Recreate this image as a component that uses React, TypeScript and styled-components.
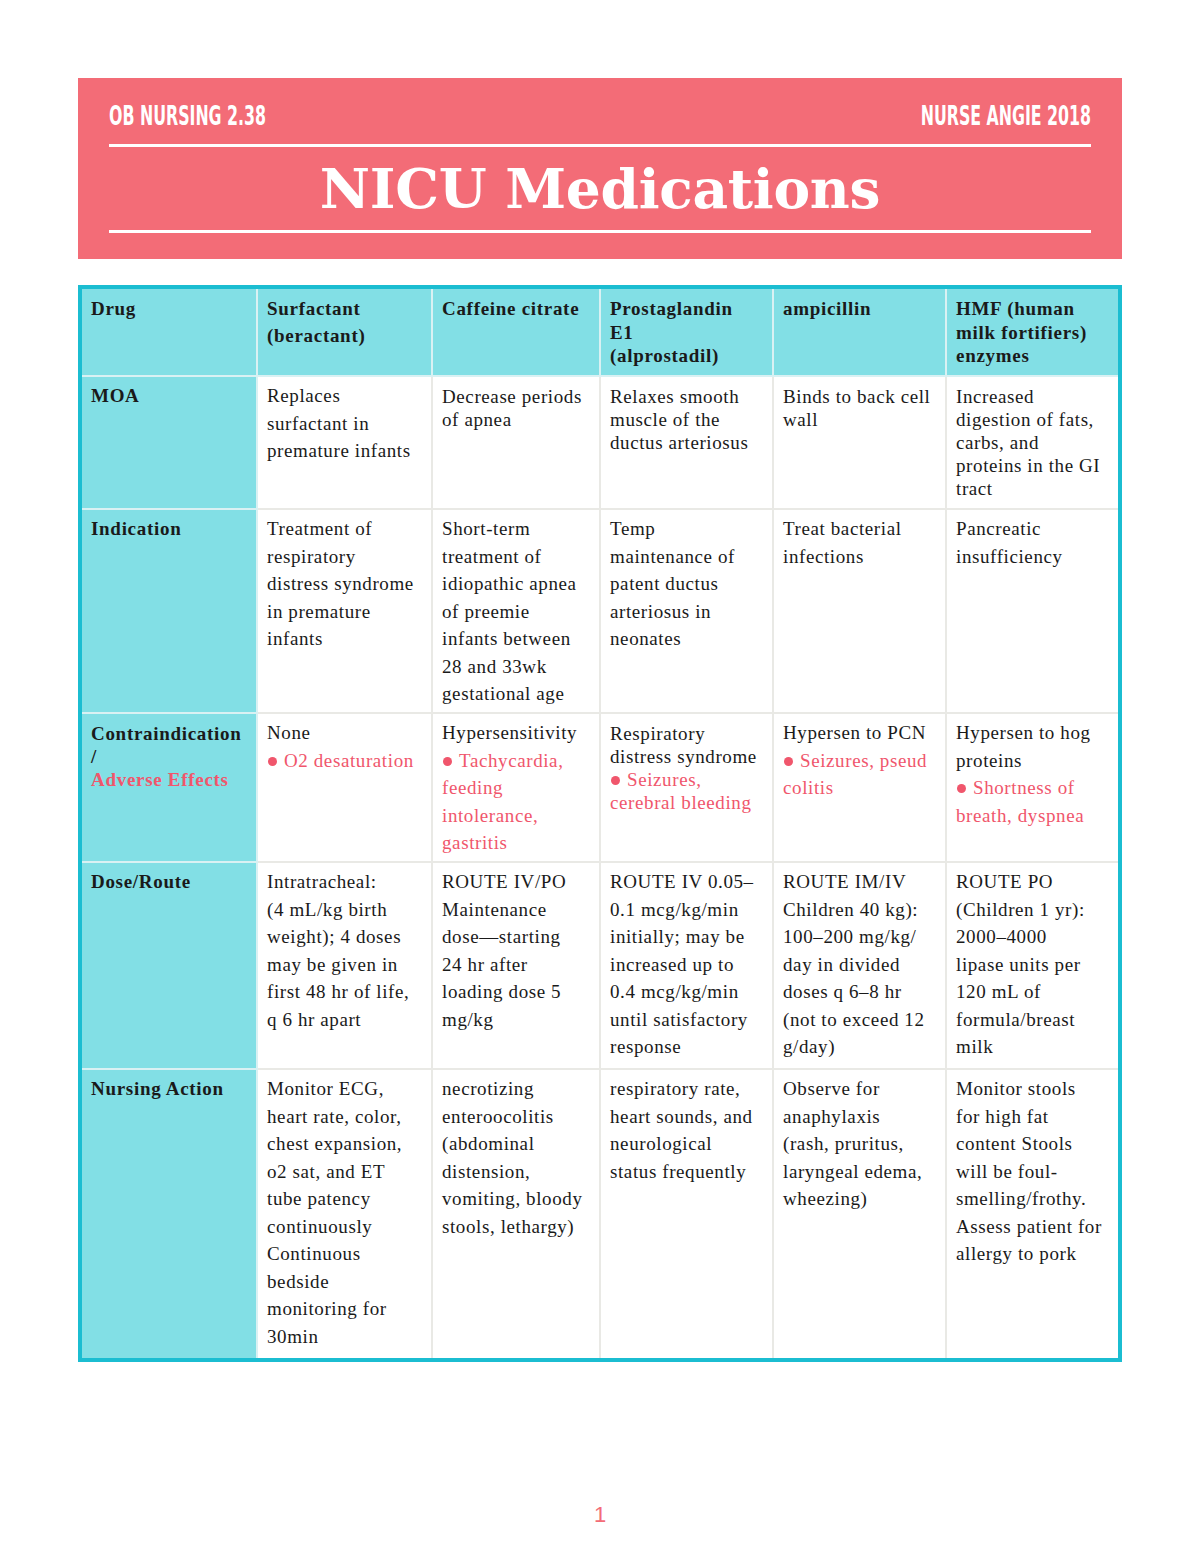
import styled, { createGlobalStyle } from 'styled-components'

const GlobalStyle = createGlobalStyle`
  html, body {
    margin: 0;
    padding: 0;
    background: #ffffff;
  }
`

const PINK = '#F36C77'
const RED = '#F0566C'
const TEAL = '#1BBDD1'
const TEAL_LIGHT = '#82DFE5'
const GRID = '#E9E9E5'

const Page = styled.div`
  width: 1200px;
  padding: 78px 78px 0;
  box-sizing: border-box;
  font-family: 'Liberation Serif', 'Times New Roman', serif;
  color: #1a1a1a;
`

const Banner = styled.header`
  background: ${PINK};
  padding: 22px 31px 26px;
  display: flex;
  flex-direction: column;
`

const TopRow = styled.div`
  height: 30px;
  display: flex;
  align-items: center;
  justify-content: space-between;
`

const Tag = styled.span<{ $align: 'left' | 'right' }>`
  font-family: 'DejaVu Sans Condensed', 'DejaVu Sans', sans-serif;
  font-weight: bold;
  font-size: 27px;
  color: #ffffff;
  white-space: nowrap;
  display: inline-block;
  transform: scaleX(0.65);
  transform-origin: ${(p) => p.$align} center;
`

const Rule = styled.div`
  height: 3px;
  background: #ffffff;
  margin-top: ${(p: { $top?: number }) => p.$top ?? 0}px;
`

const Title = styled.h1`
  margin: 0;
  height: 83px;
  display: flex;
  align-items: center;
  justify-content: center;
  font-family: 'DejaVu Serif', serif;
  font-weight: bold;
  font-size: 55px;
  letter-spacing: -0.3px;
  color: #ffffff;
`

const TableWrap = styled.div`
  margin-top: 26px;
  border: 4px solid ${TEAL};
`

const Table = styled.table`
  width: 100%;
  border-collapse: collapse;
  border-style: hidden;
  table-layout: fixed;
`

const Row = styled.tr<{ $h: number }>`
  height: ${(p) => p.$h}px;
`

const Cell = styled.td<{ $head?: boolean; $label?: boolean; $lh: number; $pt: number }>`
  border: 2px solid ${(p) => (p.$label || p.$head ? '#D9F1F3' : GRID)};
  background: ${(p) => (p.$label || p.$head ? TEAL_LIGHT : '#ffffff')};
  vertical-align: top;
  padding: ${(p) => p.$pt}px 4px 0 9px;
  font-size: 19px;
  line-height: ${(p) => p.$lh}px;
  font-weight: ${(p) => (p.$label || p.$head ? 'bold' : 'normal')};
  letter-spacing: ${(p) => (p.$label || p.$head ? '0.7px' : '0.6px')};
  overflow: hidden;
`

const Line = styled.div<{ $red?: boolean }>`
  white-space: nowrap;
  color: ${(p) => (p.$red ? RED : '#1a1a1a')};
`

const Dot = styled.span`
  display: inline-block;
  width: 9px;
  height: 9px;
  border-radius: 50%;
  background: ${RED};
  margin: 0 7px 2px 1px;
  vertical-align: middle;
`

const PageNum = styled.div`
  margin-top: 141px;
  text-align: center;
  font-family: 'Liberation Sans', Arial, sans-serif;
  font-size: 22px;
  line-height: 24px;
  color: ${PINK};
`

type Text = string | { t: string; red?: boolean; dot?: boolean }
type CellData = { lines: Text[]; tight?: boolean }

const red = (t: string, dot = true): Text => ({ t, red: true, dot })

const widths = [175, 175, 168, 173, 173, 172]

const header: CellData[] = [
  { lines: ['Drug'] },
  { lines: ['Surfactant', '(beractant)'] },
  { lines: ['Caffeine citrate'], tight: true },
  { lines: ['Prostaglandin', 'E1', '(alprostadil)'], tight: true },
  { lines: ['ampicillin'], tight: true },
  { lines: ['HMF (human', 'milk fortifiers)', 'enzymes'], tight: true },
]

type RowData = { h: number; label: CellData; cells: CellData[] }

const rows: RowData[] = [
  {
    h: 133,
    label: { lines: ['MOA'] },
    cells: [
      { lines: ['Replaces', 'surfactant in', 'premature infants'] },
      { lines: ['Decrease periods', 'of apnea'], tight: true },
      { lines: ['Relaxes smooth', 'muscle of the', 'ductus arteriosus'], tight: true },
      { lines: ['Binds to back cell', 'wall'], tight: true },
      { lines: ['Increased', 'digestion of fats,', 'carbs, and', 'proteins in the GI', 'tract'], tight: true },
    ],
  },
  {
    h: 204,
    label: { lines: ['Indication'] },
    cells: [
      { lines: ['Treatment of', 'respiratory', 'distress syndrome', 'in premature', 'infants'] },
      { lines: ['Short-term', 'treatment of', 'idiopathic apnea', 'of preemie', 'infants between', '28 and 33wk', 'gestational age'] },
      { lines: ['Temp', 'maintenance of', 'patent ductus', 'arteriosus in', 'neonates'] },
      { lines: ['Treat bacterial', 'infections'] },
      { lines: ['Pancreatic', 'insufficiency'] },
    ],
  },
  {
    h: 149,
    label: { lines: ['Contraindication', '/', red('Adverse Effects', false)], tight: true },
    cells: [
      { lines: ['None', red('O2 desaturation')] },
      { lines: ['Hypersensitivity', red('Tachycardia,'), red('feeding', false), red('intolerance,', false), red('gastritis', false)] },
      { lines: ['Respiratory', 'distress syndrome', red('Seizures,'), red('cerebral bleeding', false)], tight: true },
      { lines: ['Hypersen to PCN', red('Seizures, pseud'), red('colitis', false)] },
      { lines: ['Hypersen to hog', 'proteins', red('Shortness of'), red('breath, dyspnea', false)] },
    ],
  },
  {
    h: 207,
    label: { lines: ['Dose/Route'] },
    cells: [
      { lines: ['Intratracheal:', '(4 mL/kg birth', 'weight); 4 doses', 'may be given in', 'first 48 hr of life,', 'q 6 hr apart'] },
      { lines: ['ROUTE IV/PO', 'Maintenance', 'dose\u2014starting', '24 hr after', 'loading dose 5', 'mg/kg'] },
      { lines: ['ROUTE IV 0.05\u2013', '0.1 mcg/kg/min', 'initially; may be', 'increased up to', '0.4 mcg/kg/min', 'until satisfactory', 'response'] },
      { lines: ['ROUTE IM/IV', 'Children 40 kg):', '100\u2013200 mg/kg/', 'day in divided', 'doses q 6\u20138 hr', '(not to exceed 12', 'g/day)'] },
      { lines: ['ROUTE PO', '(Children 1 yr):', '2000\u20134000', 'lipase units per', '120 mL of', 'formula/breast', 'milk'] },
    ],
  },
  {
    h: 289,
    label: { lines: ['Nursing Action'] },
    cells: [
      { lines: ['Monitor ECG,', 'heart rate, color,', 'chest expansion,', 'o2 sat, and ET', 'tube patency', 'continuously', 'Continuous', 'bedside', 'monitoring for', '30min'] },
      { lines: ['necrotizing', 'enteroocolitis', '(abdominal', 'distension,', 'vomiting, bloody', 'stools, lethargy)'] },
      { lines: ['respiratory rate,', 'heart sounds, and', 'neurological', 'status frequently'] },
      { lines: ['Observe for', 'anaphylaxis', '(rash, pruritus,', 'laryngeal edema,', 'wheezing)'] },
      { lines: ['Monitor stools', 'for high fat', 'content Stools', 'will be foul-', 'smelling/frothy.', 'Assess patient for', 'allergy to pork'] },
    ],
  },
]

function Lines({ lines }: { lines: Text[] }) {
  return (
    <>
      {lines.map((l, i) =>
        typeof l === 'string' ? (
          <Line key={i}>{l}</Line>
        ) : (
          <Line key={i} $red={l.red}>
            {l.dot && <Dot />}
            {l.t}
          </Line>
        )
      )}
    </>
  )
}

function App() {
  return (
    <Page>
      <GlobalStyle />
      <Banner>
        <TopRow>
          <Tag $align="left">OB NURSING 2.38</Tag>
          <Tag $align="right">NURSE ANGIE 2018</Tag>
        </TopRow>
        <Rule $top={14} />
        <Title>NICU Medications</Title>
        <Rule />
      </Banner>

      <TableWrap>
        <Table>
          <colgroup>
            {widths.map((w, i) => (
              <col key={i} style={{ width: w }} />
            ))}
          </colgroup>
          <tbody>
            <Row $h={87}>
              {header.map((c, i) => (
                <Cell key={i} $head $lh={c.tight ? 23.5 : 27} $pt={c.tight ? 8 : 6}>
                  <Lines lines={c.lines} />
                </Cell>
              ))}
            </Row>
            {rows.map((r, ri) => (
              <Row key={ri} $h={r.h}>
                <Cell $label $lh={r.label.tight ? 23 : 27.5} $pt={r.label.tight ? 8 : 5}>
                  <Lines lines={r.label.lines} />
                </Cell>
                {r.cells.map((c, ci) => (
                  <Cell key={ci} $lh={c.tight ? 23 : 27.5} $pt={c.tight ? 8 : 5}>
                    <Lines lines={c.lines} />
                  </Cell>
                ))}
              </Row>
            ))}
          </tbody>
        </Table>
      </TableWrap>

      <PageNum>1</PageNum>
    </Page>
  )
}

export default App
